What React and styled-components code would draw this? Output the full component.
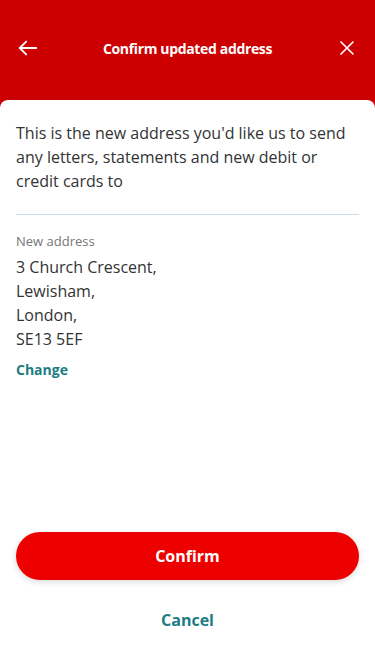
import styled, { createGlobalStyle } from 'styled-components';

const GlobalStyle = createGlobalStyle`
  html, body {
    margin: 0;
    padding: 0;
    background: #cc0000;
  }
  * {
    box-sizing: border-box;
  }
  body {
    font-family: "Open Sans", "Noto Sans", Arial, sans-serif;
    -webkit-font-smoothing: antialiased;
  }
`;

const Screen = styled.div`
  min-height: 100vh;
  height: 667px;
  display: flex;
  flex-direction: column;
  background: #cc0000;
`;

const Header = styled.header`
  height: 100px;
  display: flex;
  align-items: center;
  padding: 0 16px 4px 16px;
  color: #ffffff;
`;

const IconButton = styled.button`
  width: 24px;
  height: 24px;
  padding: 0;
  border: none;
  background: none;
  color: #ffffff;
  display: flex;
  align-items: center;
  justify-content: center;
  cursor: pointer;
`;

const Title = styled.h1`
  flex: 1;
  margin: 0;
  text-align: center;
  font-size: 14px;
  font-weight: 700;
  letter-spacing: -0.35px;
`;

const Card = styled.main`
  flex: 1;
  background: #ffffff;
  border-radius: 8px 8px 0 0;
  display: flex;
  flex-direction: column;
  padding: 0 16px;
`;

const Intro = styled.p`
  margin: 0;
  padding: 21px 0 21px;
  font-size: 16px;
  line-height: 24px;
  color: #333333;
  border-bottom: 1px solid #ccdde6;
`;

const Section = styled.section`
  padding-top: 16px;
  display: flex;
  flex-direction: column;
`;

const Label = styled.span`
  font-size: 13px;
  line-height: 20px;
  color: #767676;
  margin-bottom: 4px;
`;

const AddressLine = styled.span`
  font-size: 16px;
  line-height: 24px;
  color: #333333;
`;

const LinkButton = styled.button`
  align-self: ${(p) => (p.$center ? 'center' : 'flex-start')};
  padding: 0;
  border: none;
  background: none;
  font-family: inherit;
  font-weight: 700;
  font-size: ${(p) => (p.$large ? '16px' : '14px')};
  color: #1d7d82;
  cursor: pointer;
  margin-top: ${(p) => (p.$center ? '0' : '9px')};
`;

const Footer = styled.div`
  margin-top: auto;
  display: flex;
  flex-direction: column;
  padding-bottom: 36px;
  gap: 29px;
`;

const PrimaryButton = styled.button`
  height: 48px;
  width: 100%;
  border: none;
  border-radius: 24px;
  background: #ec0000;
  color: #ffffff;
  font-family: inherit;
  font-size: 16px;
  font-weight: 700;
  box-shadow: 0 2px 6px rgba(0, 0, 0, 0.15);
  cursor: pointer;
`;

const address = ['3 Church Crescent,', 'Lewisham,', 'London,', 'SE13 5EF'];

export default function App() {
  return (
    <>
      <GlobalStyle />
      <Screen>
        <Header>
          <IconButton aria-label="Back">
            <svg width="22" height="22" viewBox="0 0 24 24" fill="none" stroke="currentColor" strokeWidth="2" strokeLinecap="round" strokeLinejoin="round">
              <path d="M21 12H3" />
              <path d="M10 5l-7 7 7 7" />
            </svg>
          </IconButton>
          <Title>Confirm updated address</Title>
          <IconButton aria-label="Close">
            <svg width="18" height="18" viewBox="0 0 24 24" fill="none" stroke="currentColor" strokeWidth="2.2" strokeLinecap="round">
              <path d="M4 4l16 16" />
              <path d="M20 4L4 20" />
            </svg>
          </IconButton>
        </Header>
        <Card>
          <Intro>
            This is the new address you'd like us to send any letters, statements and new debit or credit cards to
          </Intro>
          <Section>
            <Label>New address</Label>
            {address.map((line) => (
              <AddressLine key={line}>{line}</AddressLine>
            ))}
            <LinkButton>Change</LinkButton>
          </Section>
          <Footer>
            <PrimaryButton>Confirm</PrimaryButton>
            <LinkButton $center $large>Cancel</LinkButton>
          </Footer>
        </Card>
      </Screen>
    </>
  );
}
